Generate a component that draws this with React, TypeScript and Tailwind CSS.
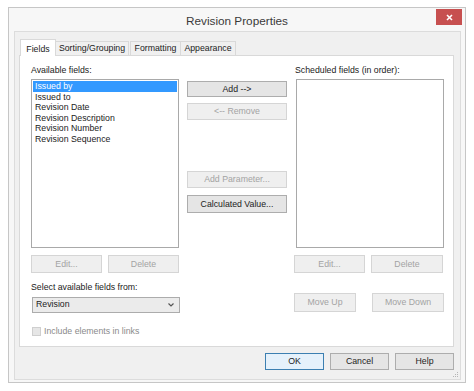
import React from "react";

const font = { fontFamily: '"Liberation Sans", Arial, sans-serif' };

function Btn({
  children,
  w,
  h = "h-[17px]",
  disabled = false,
  extra = "",
}: {
  children: React.ReactNode;
  w: string;
  h?: string;
  disabled?: boolean;
  extra?: string;
}) {
  return (
    <div
      className={`${w} ${h} flex items-center justify-center border text-[8.75px] leading-none ${
        disabled
          ? "border-[#d5d5d5] bg-[#efefef] text-[#a3a3a3]"
          : "border-[#adadad] bg-[#e5e5e5] text-[#222]"
      } ${extra}`}
    >
      {children}
    </div>
  );
}

export default function App() {
  const items = [
    "Issued by",
    "Issued to",
    "Revision Date",
    "Revision Description",
    "Revision Number",
    "Revision Sequence",
  ];
  return (
    <div className="w-[474px] h-[391px] bg-white pt-[7px] pl-[8px]" style={font}>
      <div className="w-[458px] h-[376px] border border-[#c6c6c6] bg-[#f7f7f7] flex flex-col">
        {/* title bar */}
        <div className="h-[23px] relative flex items-center justify-center">
          <span className="text-[11.75px] text-[#3a3a3a] mt-[2px]">Revision Properties</span>
          <div className="absolute right-[3px] top-[1px] w-[26px] h-[16px] bg-[#c75050] flex items-center justify-center">
            <svg width="7" height="7" viewBox="0 0 7 7">
              <path d="M1 1 L6 6 M6 1 L1 6" stroke="#fff" strokeWidth="1.6" />
            </svg>
          </div>
        </div>
        {/* client */}
        <div className="ml-[5px] w-[447px] h-[349px] border border-[#dcdcdc] bg-[#f0f0f0] flex flex-col relative">
          {/* tabs */}
          <div className="mt-[6px] ml-[4px] h-[17px] flex items-end text-[8.75px] text-[#222]">
            <div className="h-[17px] w-[36px] ml-[1px] border border-b-0 border-[#d9d9d9] bg-white flex items-start justify-center pt-[3px] relative z-10 -mb-px pb-px">
              Fields
            </div>
            <div className="h-[14px] w-[73px] border border-b-0 border-l-0 border-[#d9d9d9] bg-[#f0f0f0] flex items-center justify-center">
              Sorting/Grouping
            </div>
            <div className="h-[14px] w-[51px] ml-[1px] border border-b-0 border-[#d9d9d9] bg-[#f0f0f0] flex items-center justify-center">
              Formatting
            </div>
            <div className="h-[14px] w-[55px] border border-b-0 border-l-0 border-[#d9d9d9] bg-[#f0f0f0] flex items-center justify-center">
              Appearance
            </div>
          </div>
          {/* panel */}
          <div className="ml-[4px] w-[435px] h-[292px] border border-[#d9d9d9] bg-white flex pl-[11px] text-[8.75px] text-[#222]">
            {/* left column */}
            <div className="w-[148px] flex flex-col pt-[9px]">
              <div className="h-[11px] leading-[11px]">Available fields:</div>
              <div className="mt-[3px] h-[169px] border border-[#a9a9a9] bg-white p-[1px]">
                {items.map((it, i) => (
                  <div
                    key={it}
                    className={`h-[10.5px] leading-[10.5px] pl-[2px] ${
                      i === 0 ? "bg-[#3399ff] text-white" : ""
                    }`}
                  >
                    {it}
                  </div>
                ))}
              </div>
              <div className="mt-[7px] flex gap-[6px]">
                <Btn w="w-[71px]" h="h-[18px]" disabled>
                  Edit...
                </Btn>
                <Btn w="w-[71px]" h="h-[18px]" disabled>
                  Delete
                </Btn>
              </div>
              <div className="mt-[9px] h-[11px] leading-[11px]">Select available fields from:</div>
              <div className="mt-[4px] ml-[1px] w-[148px] h-[16px] border border-[#acacac] bg-[#ebebeb] flex items-center justify-between pl-[3px] pr-[5px]">
                <span>Revision</span>
                <svg width="6" height="4" viewBox="0 0 6 4">
                  <path d="M0.5 0.5 L3 3 L5.5 0.5" stroke="#555" strokeWidth="1.2" fill="none" />
                </svg>
              </div>
              <div className="mt-[12px] ml-[1px] flex items-center gap-[3px] text-[#8a8a8a]">
                <div className="w-[9px] h-[9px] border border-[#cfcfcf] bg-[#e6e6e6]" />
                <span>Include elements in links</span>
              </div>
            </div>
            {/* middle column */}
            <div className="ml-[8px] w-[100px] flex flex-col pt-[25px]">
              <Btn w="w-[100px]" h="h-[16px]">Add --&gt;</Btn>
              <Btn w="w-[100px]" h="h-[17px]" disabled extra="mt-[6px]">
                &lt;-- Remove
              </Btn>
              <Btn w="w-[100px]" h="h-[17px]" disabled extra="mt-[51px]">
                Add Parameter...
              </Btn>
              <Btn w="w-[100px]" h="h-[18px]" extra="mt-[7px]">
                Calculated Value...
              </Btn>
            </div>
            {/* right column */}
            <div className="ml-[8px] w-[150px] flex flex-col pt-[9px]">
              <div className="h-[11px] leading-[11px]">Scheduled fields (in order):</div>
              <div className="mt-[3px] ml-[1px] w-[148px] h-[169px] border border-[#a9a9a9] bg-white" />
              <div className="mt-[7px] ml-[-1px] flex gap-[6px]">
                <Btn w="w-[71px]" h="h-[18px]" disabled>
                  Edit...
                </Btn>
                <Btn w="w-[72px]" h="h-[18px]" disabled>
                  Delete
                </Btn>
              </div>
              <div className="mt-[20px] ml-[-1px] flex gap-[16px]">
                <Btn w="w-[62px]" h="h-[19px]" disabled>
                  Move Up
                </Btn>
                <Btn w="w-[72px]" h="h-[19px]" disabled>
                  Move Down
                </Btn>
              </div>
            </div>
          </div>
          {/* bottom buttons */}
          <div className="mt-[6px] ml-[250px] flex gap-[6px] text-[8.75px]">
            <Btn w="w-[59px]" extra="!border-[#3c7fb1] !bg-[#e5f1fb]">OK</Btn>
            <Btn w="w-[59px]">Cancel</Btn>
            <Btn w="w-[59px]">Help</Btn>
          </div>
          {/* grip */}
          <svg className="absolute right-[1px] bottom-[1px]" width="7" height="7" viewBox="0 0 7 7">
            <rect x="5" y="1" width="1" height="1" fill="#b5b5b5" />
            <rect x="3" y="3" width="1" height="1" fill="#b5b5b5" />
            <rect x="5" y="3" width="1" height="1" fill="#b5b5b5" />
            <rect x="1" y="5" width="1" height="1" fill="#b5b5b5" />
            <rect x="3" y="5" width="1" height="1" fill="#b5b5b5" />
            <rect x="5" y="5" width="1" height="1" fill="#b5b5b5" />
          </svg>
        </div>
      </div>
    </div>
  );
}
